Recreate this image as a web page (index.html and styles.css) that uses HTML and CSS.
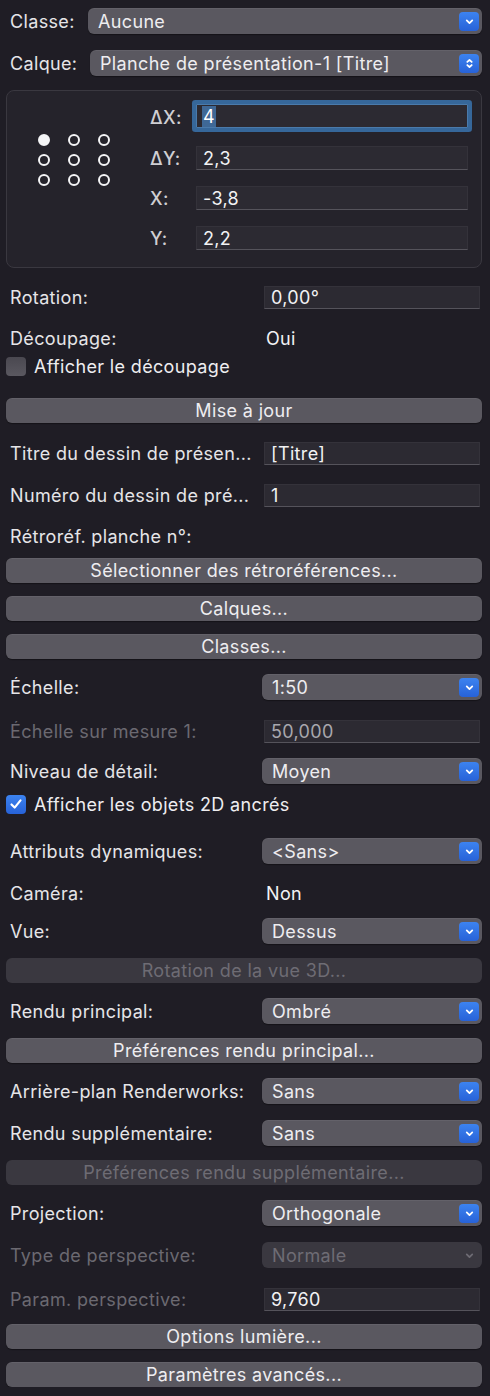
FILE: index.html
```html
<!DOCTYPE html>
<html lang="fr">
<head>
  <meta charset="UTF-8" />
  <meta name="viewport" content="width=device-width, initial-scale=1" />
  <title>Info objet - Fenêtre de présentation</title>
  <link rel="stylesheet" href="styles.css">
</head>
<body>
  <div class="panel">

    <div class="row sp-0">
      <span class="label short">Classe:</span>
      <div class="select"><span>Aucune</span><i class="arrow"><svg viewBox="0 0 10 10"><path d="M2.5 4 5 6.5 7.5 4"/></svg></i></div>
    </div>

    <div class="row sp-16">
      <span class="label short wide">Calque:</span>
      <div class="select"><span>Planche de présentation-1 [Titre]</span><i class="arrow"><svg viewBox="0 0 10 10"><path d="M3 3.6 5 1.8 7 3.6M3 6.4 5 8.2 7 6.4"/></svg></i></div>
    </div>

    <div class="box sp-14">
      <div class="dots">
        <span class="dot on"></span><span class="dot"></span><span class="dot"></span>
        <span class="dot"></span><span class="dot"></span><span class="dot"></span>
        <span class="dot"></span><span class="dot"></span><span class="dot"></span>
      </div>
      <div class="coords">
        <span class="label">ΔX:</span>
        <div class="field focus"><mark>4</mark></div>
        <span class="label">ΔY:</span>
        <div class="field">2,3</div>
        <span class="label">X:</span>
        <div class="field">-3,8</div>
        <span class="label">Y:</span>
        <div class="field">2,2</div>
      </div>
    </div>

    <div class="row sp-18">
      <span class="label">Rotation:</span>
      <div class="field">0,00°</div>
    </div>

    <div class="row text sp-19">
      <span class="label">Découpage:</span>
      <span class="value">Oui</span>
    </div>

    <label class="check sp-9">
      <span class="box-check"></span>
      Afficher le découpage
    </label>

    <button class="btn sp-23">Mise à jour</button>

    <div class="row sp-19">
      <span class="label">Titre du dessin de présen...</span>
      <div class="field">[Titre]</div>
    </div>

    <div class="row sp-19">
      <span class="label">Numéro du dessin de pré...</span>
      <div class="field">1</div>
    </div>

    <div class="row text sp-19">
      <span class="label">Rétroréf. planche n°:</span>
    </div>

    <button class="btn sp-12">Sélectionner des rétroréférences...</button>
    <button class="btn sp-13">Calques...</button>
    <button class="btn sp-13">Classes...</button>

    <div class="row sp-15">
      <span class="label">Échelle:</span>
      <div class="select"><span>1:50</span><i class="arrow"><svg viewBox="0 0 10 10"><path d="M2.5 4 5 6.5 7.5 4"/></svg></i></div>
    </div>

    <div class="row sp-20">
      <span class="label off">Échelle sur mesure 1:</span>
      <div class="field dim">50,000</div>
    </div>

    <div class="row sp-15">
      <span class="label">Niveau de détail:</span>
      <div class="select"><span>Moyen</span><i class="arrow"><svg viewBox="0 0 10 10"><path d="M2.5 4 5 6.5 7.5 4"/></svg></i></div>
    </div>

    <label class="check sp-11">
      <span class="box-check on"><svg viewBox="0 0 20 20"><path d="M5 10.5 8.5 14 15 6"/></svg></span>
      Afficher les objets 2D ancrés
    </label>

    <div class="row sp-25">
      <span class="label">Attributs dynamiques:</span>
      <div class="select"><span>&lt;Sans&gt;</span><i class="arrow"><svg viewBox="0 0 10 10"><path d="M2.5 4 5 6.5 7.5 4"/></svg></i></div>
    </div>

    <div class="row text sp-19">
      <span class="label">Caméra:</span>
      <span class="value">Non</span>
    </div>

    <div class="row sp-15">
      <span class="label">Vue:</span>
      <div class="select"><span>Dessus</span><i class="arrow"><svg viewBox="0 0 10 10"><path d="M2.5 4 5 6.5 7.5 4"/></svg></i></div>
    </div>

    <button class="btn off sp-14">Rotation de la vue 3D...</button>

    <div class="row sp-15">
      <span class="label">Rendu principal:</span>
      <div class="select"><span>Ombré</span><i class="arrow"><svg viewBox="0 0 10 10"><path d="M2.5 4 5 6.5 7.5 4"/></svg></i></div>
    </div>

    <button class="btn sp-14">Préférences rendu principal...</button>

    <div class="row sp-15">
      <span class="label">Arrière-plan Renderworks:</span>
      <div class="select"><span>Sans</span><i class="arrow"><svg viewBox="0 0 10 10"><path d="M2.5 4 5 6.5 7.5 4"/></svg></i></div>
    </div>

    <div class="row sp-16">
      <span class="label">Rendu supplémentaire:</span>
      <div class="select"><span>Sans</span><i class="arrow"><svg viewBox="0 0 10 10"><path d="M2.5 4 5 6.5 7.5 4"/></svg></i></div>
    </div>

    <button class="btn off sp-14">Préférences rendu supplémentaire...</button>

    <div class="row sp-15">
      <span class="label">Projection:</span>
      <div class="select"><span>Orthogonale</span><i class="arrow"><svg viewBox="0 0 10 10"><path d="M2.5 4 5 6.5 7.5 4"/></svg></i></div>
    </div>

    <div class="row sp-16">
      <span class="label off">Type de perspective:</span>
      <div class="select off"><span>Normale</span><i class="arrow"><svg viewBox="0 0 10 10"><path d="M2.5 4 5 6.5 7.5 4"/></svg></i></div>
    </div>

    <div class="row sp-20">
      <span class="label off">Param. perspective:</span>
      <div class="field">9,760</div>
    </div>

    <button class="btn sp-13">Options lumière...</button>
    <button class="btn sp-13">Paramètres avancés...</button>

  </div>
</body>
</html>
```

FILE: styles.css
```css
html, body {
  margin: 0;
  padding: 0;
  background-color: #1f1d25;
  font-family: Inter, "Noto Sans", "Liberation Sans", sans-serif;
  font-size: 18px;
  letter-spacing: 0.35px;
  color: #e6e5e8;
}

.panel {
  display: flex;
  flex-direction: column;
  padding: 8px 8px 0 6px;
}

/* spacing between rows */
.sp-0 { margin-top: 0; }
.sp-9 { margin-top: 9px; }
.sp-11 { margin-top: 11px; }
.sp-12 { margin-top: 12px; }
.sp-13 { margin-top: 13px; }
.sp-14 { margin-top: 14px; }
.sp-15 { margin-top: 15px; }
.sp-16 { margin-top: 16px; }
.sp-18 { margin-top: 18px; }
.sp-19 { margin-top: 19px; }
.sp-20 { margin-top: 20px; }
.sp-23 { margin-top: 23px; }
.sp-25 { margin-top: 25px; }

.row {
  display: flex;
  align-items: center;
}

.row.text {
  height: 20px;
}

.label {
  width: 256px;
  flex: none;
  padding-left: 4px;
  box-sizing: border-box;
  white-space: nowrap;
  overflow: hidden;
}

.label.short { width: 82px; }
.label.short.wide { width: 84px; }

.label.off { color: #6b6971; }

.value {
  padding-left: 4px;
  color: #f2f2f4;
}

/* popup menus */
.select {
  flex: 1;
  height: 26px;
  box-sizing: border-box;
  display: flex;
  align-items: center;
  justify-content: space-between;
  padding: 0 3px 0 10px;
  background: #5a5860;
  border-radius: 6px;
  box-shadow: 0 1px 1px rgba(0, 0, 0, 0.35), inset 0 1px 0 rgba(255, 255, 255, 0.06);
  color: #eeedf0;
  white-space: nowrap;
}

.select .arrow {
  width: 20px;
  height: 19px;
  border-radius: 4px;
  background: linear-gradient(#3c83f0, #2762d8);
  display: flex;
  align-items: center;
  justify-content: center;
}

.select .arrow svg {
  width: 11px;
  height: 11px;
  fill: none;
  stroke: #fff;
  stroke-width: 1.6;
  stroke-linecap: round;
  stroke-linejoin: round;
}

.select.off {
  background: #3a3840;
  box-shadow: none;
  color: #6e6c74;
}

.select.off .arrow { background: none; }
.select.off .arrow svg { stroke: #6e6c74; }

/* text fields */
.field {
  flex: 1;
  height: 23px;
  margin: 0 2px;
  box-sizing: border-box;
  padding: 0 6px;
  display: flex;
  align-items: center;
  background: #2c2a32;
  border: 1px solid #34323a;
  border-bottom-color: #55535b;
  color: #f2f2f4;
}

.field.dim { color: #a8a7ad; }

/* coordinates box */
.box {
  height: 178px;
  box-sizing: border-box;
  display: flex;
  align-items: flex-start;
  background: #25232b;
  border: 1px solid #3a3840;
  border-radius: 8px;
  padding: 13px 13px 0 0;
}

.dots {
  display: grid;
  grid-template-columns: repeat(3, 12px);
  column-gap: 18px;
  row-gap: 8px;
  margin: 30px 40px 0 31px;
}

.dot {
  width: 12px;
  height: 12px;
  box-sizing: border-box;
  border: 2px solid #f4f4f6;
  border-radius: 50%;
}

.dot.on { background: #f4f4f6; }

.coords {
  flex: 1;
  display: grid;
  grid-template-columns: 46px 1fr;
  row-gap: 16px;
  align-items: center;
}

.coords .label {
  width: auto;
  padding-left: 0;
  font-weight: 500;
  color: #cfced3;
}

.coords .field {
  height: 24px;
  margin: 0;
}

.coords .field.focus {
  margin-bottom: 2px;
  box-shadow: 0 0 0 4px #36679a;
  border-radius: 1px;
  border-color: #4a7aab;
  padding-left: 5px;
}

.coords mark {
  background: #3f6896;
  color: #ffffff;
  padding: 0 1px;
}

/* checkboxes */
.check {
  display: flex;
  align-items: center;
  gap: 8px;
  height: 18px;
  color: #eeedf0;
}

.box-check {
  width: 20px;
  height: 19px;
  box-sizing: border-box;
  border-radius: 4px;
  background: linear-gradient(#4a4850, #5a5860);
  display: flex;
  align-items: center;
  justify-content: center;
}

.box-check.on {
  background: linear-gradient(#3c83f0, #2762d8);
}

.box-check svg {
  width: 18px;
  height: 18px;
  fill: none;
  stroke: #fff;
  stroke-width: 2.4;
  stroke-linecap: round;
  stroke-linejoin: round;
}

/* push buttons */
.btn {
  height: 25px;
  width: 100%;
  border: none;
  border-radius: 6px;
  background: #5a5860;
  box-shadow: 0 1px 1px rgba(0, 0, 0, 0.35), inset 0 1px 0 rgba(255, 255, 255, 0.06);
  font-family: inherit;
  font-size: 18px;
  letter-spacing: 0.35px;
  color: #eeedf0;
  padding: 0;
  line-height: 25px;
}

.btn.off {
  background: #3a3840;
  box-shadow: none;
  color: #6e6c74;
}
```
